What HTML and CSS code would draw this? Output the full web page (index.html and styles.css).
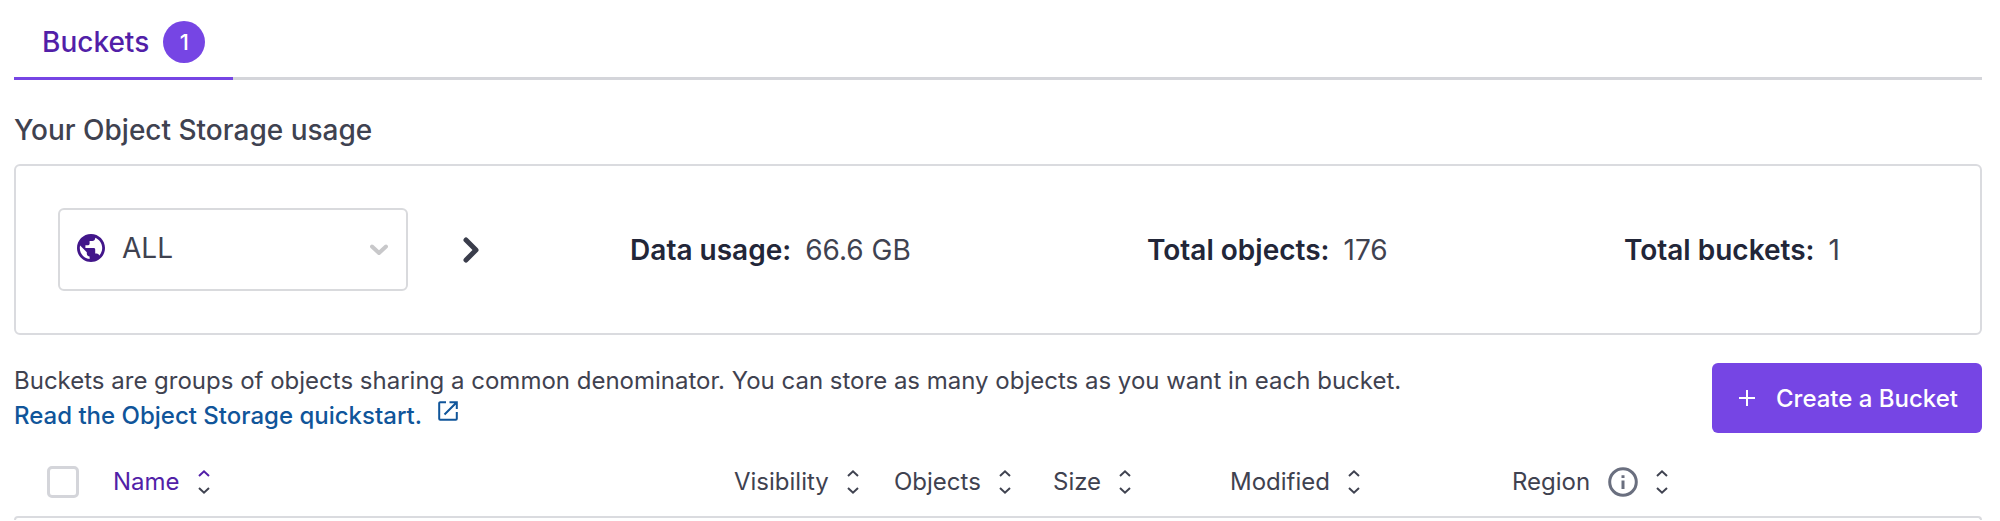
FILE: index.html
```html
<!DOCTYPE html>
<html lang="en">
<head>
<meta charset="utf-8">
<title>Object Storage</title>
<link rel="stylesheet" href="styles.css">
</head>
<body>
<svg class="sprite" aria-hidden="true">
  <symbol id="sort" viewBox="0 0 12 26">
    <path class="sort-up" d="M1 7 6 2.300 11 7"/>
    <path class="sort-down" d="M1 19 6 23.700 11 19"/>
  </symbol>
</svg>
<main class="page">
  <nav class="tabs">
    <a class="tab" href="#buckets" aria-current="page">Buckets <span class="badge">1</span></a>
  </nav>

  <h2 class="title">Your Object Storage usage</h2>
  <section class="usage">
    <div class="picker">
      <select class="picker-select" aria-label="Region"><option>ALL</option></select>
      <svg class="picker-globe" viewBox="2 2 20 20" aria-hidden="true"><path fill="currentColor" d="M12 2C6.48 2 2 6.48 2 12s4.48 10 10 10 10-4.48 10-10S17.52 2 12 2zm-1 17.93c-3.95-.49-7-3.85-7-7.93 0-.62.08-1.21.21-1.79L9 15v1c0 1.100.9 2 2 2v1.930zm6.900-2.540c-.26-.81-1-1.390-1.900-1.390h-1v-3c0-.55-.45-1-1-1H8v-2h2c.55 0 1-.45 1-1V7h2c1.100 0 2-.9 2-2v-.41c2.930 1.190 5 4.060 5 7.410 0 2.080-.8 3.970-2.100 5.390z"/></svg>
      <svg class="picker-arrow" viewBox="0 0 18 12" aria-hidden="true"><path d="M2 2.500 9 9 16 2.500"/></svg>
    </div>
    <svg class="next" viewBox="0 0 18 28" aria-hidden="true"><path d="M4 4 14 14 4 24"/></svg>
    <dl class="stats">
      <div class="stat"><dt>Data usage:</dt><dd>66.6 GB</dd></div>
      <div class="stat"><dt>Total objects:</dt><dd>176</dd></div>
      <div class="stat"><dt>Total buckets:</dt><dd>1</dd></div>
    </dl>
  </section>

  <section class="intro">
    <p class="intro-text">Buckets are groups of objects sharing a common denominator. You can store as many objects as you want in each bucket.<br>
      <a class="doc-link" href="#quickstart">Read the Object Storage quickstart.<svg class="external" viewBox="0 0 20 20" aria-hidden="true"><path d="M8 1.200H2.200a1 1 0 0 0-1 1v15.600a1 1 0 0 0 1 1h15.600a1 1 0 0 0 1-1V11M11.500 1.200h7.300V8M18.500 1.500 6.500 13.500"/></svg></a></p>
    <button class="create" type="button"><svg class="plus" viewBox="0 0 16 16" aria-hidden="true"><path d="M8 0V16M0 8H16"/></svg>Create a Bucket</button>
  </section>

  <table class="buckets">
    <colgroup><col class="c-check"><col><col class="c-visibility"><col class="c-objects"><col class="c-size"><col class="c-modified"><col class="c-region"></colgroup>
    <thead>
      <tr>
        <th class="check-cell"><input class="check" type="checkbox" aria-label="Select all buckets"></th>
        <th><button class="sorter sorter-active" type="button">Name<svg class="sort"><use href="#sort"/></svg></button></th>
        <th><button class="sorter" type="button">Visibility<svg class="sort"><use href="#sort"/></svg></button></th>
        <th><button class="sorter" type="button">Objects<svg class="sort"><use href="#sort"/></svg></button></th>
        <th><button class="sorter" type="button">Size<svg class="sort"><use href="#sort"/></svg></button></th>
        <th><button class="sorter" type="button">Modified<svg class="sort"><use href="#sort"/></svg></button></th>
        <th><button class="sorter" type="button">Region<svg class="info" viewBox="0 0 30 30"><circle cx="15" cy="15" r="13.300"/><path d="M15 13.500V22M15 8.200V11"/></svg><svg class="sort"><use href="#sort"/></svg></button></th>
      </tr>
    </thead>
    <tbody><tr><td class="row-edge" colspan="7"></td></tr></tbody>
  </table>
</main>
</body>
</html>
```
FILE: styles.css
```css
* { box-sizing: border-box; }
body {
  margin: 0;
  background: #fff;
  color: #3f4250;
  font: 400 24px/35px Inter, "Liberation Sans", sans-serif;
}
.sprite { position: absolute; width: 0; height: 0; }
.page { padding: 0 18px 0 14px; }

.tabs {
  display: flex;
  height: 80px;
  box-shadow: inset 0 -3px #d4d5da;
}
.tab {
  display: flex;
  align-items: center;
  gap: 14px;
  padding: 7px 28px 0;
  border-bottom: 3px solid #7645e4;
  color: #521fa8;
  font-size: 28px;
  font-weight: 500;
  text-decoration: none;
}
.badge {
  display: grid;
  place-items: center;
  width: 42px;
  height: 42px;
  border-radius: 50%;
  background: #7645e4;
  color: #fff;
  font-size: 22px;
}

.title {
  margin: 32px 0 16px;
  color: #3f4250;
  font-size: 28px;
  font-weight: 500;
  line-height: 36px;
}
.usage {
  display: flex;
  align-items: center;
  padding: 42px 22px 42px 42px;
  border: 2px solid #dadbdf;
  border-radius: 6px;
}
.picker { display: grid; position: relative; width: 350px; }
.picker-select {
  appearance: none;
  height: 83px;
  padding: 0 48px 2px 62px;
  border: 2px solid #d9dadd;
  border-radius: 6px;
  background: #fff;
  color: #3f4250;
  font: inherit;
  font-size: 28px;
}
.picker-globe {
  position: absolute;
  top: 26px;
  left: 19px;
  width: 28px;
  height: 28px;
  color: #42168a;
  pointer-events: none;
}
.picker-arrow {
  position: absolute;
  top: 36px;
  right: 20px;
  width: 18px;
  height: 12px;
  fill: none;
  stroke: #c8c8ca;
  stroke-width: 4;
  stroke-linecap: round;
  stroke-linejoin: round;
  pointer-events: none;
}
.next {
  width: 18px;
  height: 28px;
  margin: 0 32px 0 54px;
  fill: none;
  stroke: #3a3d4b;
  stroke-width: 5;
  stroke-linecap: round;
  stroke-linejoin: round;
}
.stats {
  display: flex;
  flex: 1;
  justify-content: space-around;
  margin: 0;
  font-size: 28px;
  line-height: 36px;
}
.stat { display: flex; gap: 14px; }
.stat dt { color: #222638; font-weight: 600; }
.stat dd { margin: 0; }

.intro {
  display: flex;
  justify-content: space-between;
  align-items: center;
  margin-top: 28px;
}
.intro-text { margin: 0; }
.doc-link { color: #10559a; font-weight: 500; text-decoration: none; }
.external {
  width: 20px;
  height: 20px;
  margin-left: 16px;
  vertical-align: 3px;
  fill: none;
  stroke: currentColor;
  stroke-width: 2;
}
.create {
  display: flex;
  align-items: center;
  gap: 21px;
  height: 70px;
  padding: 0 24px 0 27px;
  border: 0;
  border-radius: 6px;
  background: #7645e4;
  color: #fff;
  font: inherit;
  font-weight: 500;
}
.plus { width: 16px; height: 16px; stroke: currentColor; stroke-width: 2; }

.buckets {
  width: 100%;
  margin-top: 14px;
  border-collapse: separate;
  border-spacing: 0;
  table-layout: fixed;
}
.c-check { width: 99px; }
.c-visibility { width: 160px; }
.c-objects { width: 159px; }
.c-size { width: 177px; }
.c-modified { width: 282px; }
.c-region { width: 470px; }
.buckets th { height: 69px; padding: 0; font-weight: 400; text-align: left; }
.buckets .check-cell { padding-left: 33px; }
.check {
  appearance: none;
  display: block;
  width: 32px;
  height: 32px;
  margin: 0;
  border: 3px solid #d4d5da;
  border-radius: 5px;
  background: #fff;
}
.sorter {
  display: flex;
  align-items: center;
  gap: 18px;
  padding: 0;
  border: 0;
  background: none;
  color: #3f4250;
  font: inherit;
}
.sorter-active { color: #521fa8; }
.sort { width: 12px; height: 26px; }
.sort-up, .sort-down {
  fill: none;
  stroke: currentColor;
  stroke-width: 2;
}
.sort-down { stroke: #3f4250; }
.info {
  width: 30px;
  height: 30px;
  fill: none;
  stroke: #6a6f7f;
  stroke-width: 3;
}
.row-edge {
  height: 4px;
  padding: 0;
  border: 2px solid #dadbdf;
  border-bottom: 0;
  border-radius: 6px 6px 0 0;
}
```
